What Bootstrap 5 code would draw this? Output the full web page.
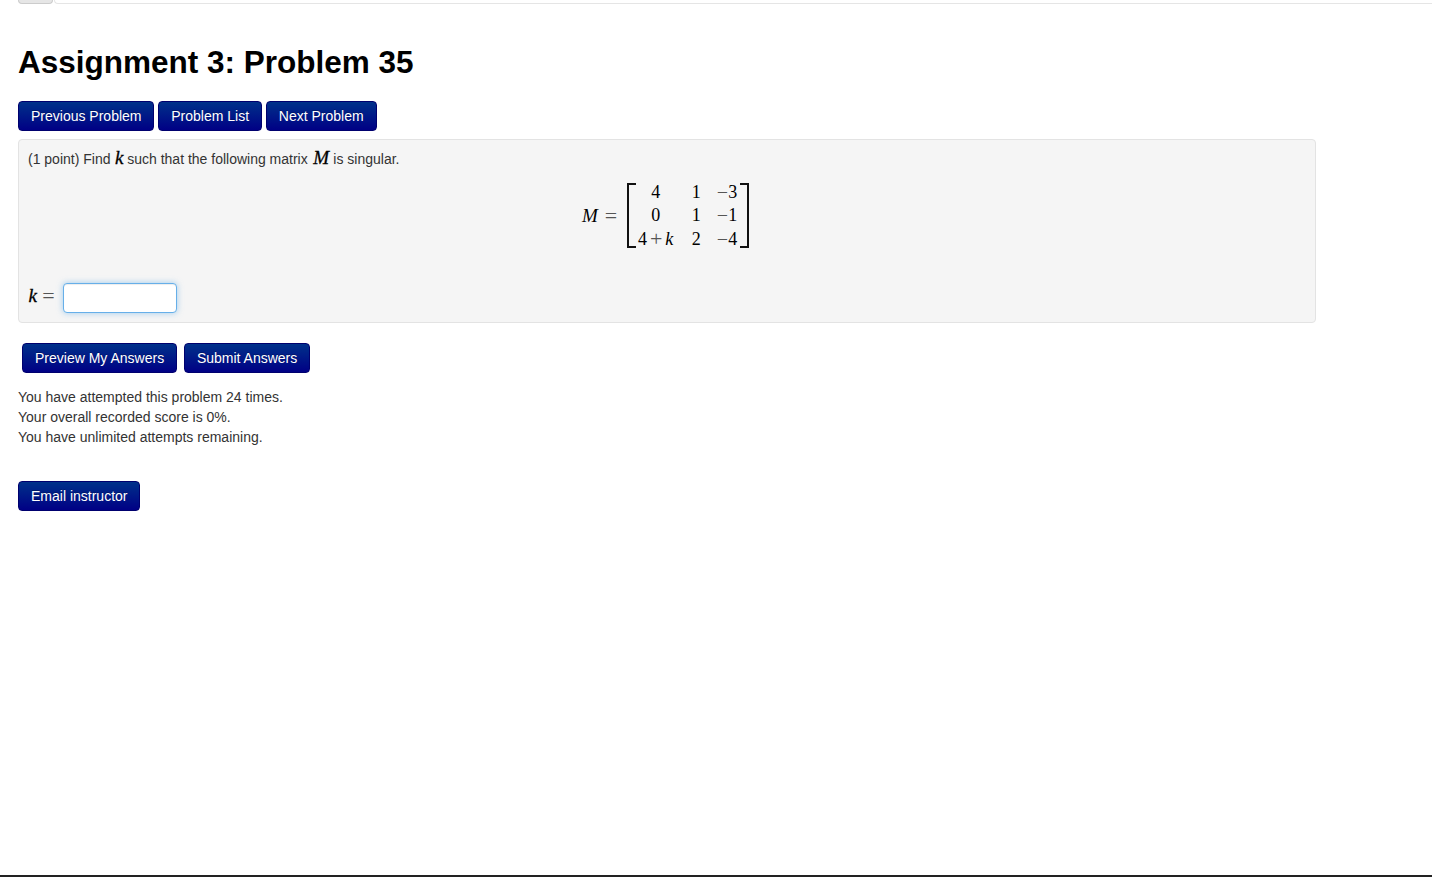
<!DOCTYPE html>
<html lang="en">
<head>
<meta charset="utf-8">
<title>Assignment 3: Problem 35</title>
<link href="https://cdn.jsdelivr.net/npm/bootstrap@5.3.0/dist/css/bootstrap.min.css" rel="stylesheet">
<style>
html,body{height:100%}
body{font-family:"Liberation Sans",Arial,sans-serif;font-size:14px;line-height:20px;color:#333;background:#fff}
.page-shell{height:877px;overflow:hidden;border-bottom:2px solid #222}
.top-strip{height:4px;padding-left:18px}
.top-tab{width:34.5px;height:4px;margin-right:1.5px;background:#e6e6e6;border:1px solid #ccc;border-top:0;border-radius:0 0 4px 4px}
.top-rule{height:4px;border-bottom:1px solid #e5e5e5;border-left:1px solid #e5e5e5;border-radius:0 0 0 4px}
.main-col{padding-left:18px;width:1316px}
.page-title{font-size:31.5px;line-height:40px;font-weight:700;color:#000;margin:38px 0 19px}
.wwbtn{font-family:"Liberation Sans",Arial,sans-serif;font-size:14px;line-height:20px;height:30px;padding:4px 11.75px 4px 12px;color:#fff;border:1px solid #00006e;border-radius:4px;background:linear-gradient(#00318a,#000085);text-shadow:0 -1px 0 rgba(0,0,0,.25);white-space:nowrap}
.wwbtn:hover{color:#fff}
.nav-row .wwbtn:last-child{padding-right:12.25px}
.problem-box{background:#f5f5f5;border:1px solid #e3e3e3;border-radius:4px;height:184px;margin-top:8px;padding:8px 9px 0}
.math{font-family:"Liberation Serif","DejaVu Serif",serif;color:#000}
.mvar{font-style:italic;font-size:19px;-webkit-text-stroke:.3px #000;margin-left:.5px}
.mvar-cap{margin:0 .5px 0 1.5px}
.display-math{font-size:18px;height:65px;margin-top:14px;padding-right:3px}
.mat-lhs{margin-right:10px}
.mat-lhs i{font-size:19px;margin-right:2.5px}
.mat-grid{display:grid;grid-template-columns:39px 42px 20px;grid-auto-rows:23.5px;width:122px;height:65px;border-left:2px solid #111;border-right:2px solid #111;position:relative;padding:0 10px 0 7px;align-items:center;align-content:center;text-align:center}
.mat-grid::before,.mat-grid::after{content:"";position:absolute;top:0;bottom:0;width:7px;border-top:2px solid #111;border-bottom:2px solid #111}
.mat-grid::before{left:0}
.mat-grid::after{right:0}
.mat-grid span{line-height:23px;white-space:nowrap}
.mat-grid .neg{justify-self:end}
.op{color:#555;font-size:22px;line-height:1;vertical-align:-1px}
.neg .op{font-size:20px}
.op-sp{margin:0 3px}
.answer-row{margin-top:35px}
.answer-label{font-size:17px;width:35px;white-space:nowrap;padding-bottom:4px}
.answer-label .op{margin-left:1px}
.ans-input{width:114px;height:30px;border:1px solid #66afe9;border-radius:4px;background:#fff;box-shadow:inset 0 1px 1px rgba(0,0,0,.075),0 0 6px rgba(102,175,233,.6);outline:0;padding:4px 6px}
.submit-row{margin:20px 0 14px 4px;gap:7px}
.nav-row{gap:4px}
.score-info{margin:0 0 34px}
</style>
</head>
<body>
<div class="page-shell">
  <div class="top-strip d-flex">
    <div class="top-tab flex-shrink-0"></div>
    <div class="top-rule flex-grow-1"></div>
  </div>
  <div class="main-col">
    <h1 class="page-title">Assignment 3: Problem 35</h1>
    <div class="d-flex nav-row">
      <a class="btn wwbtn" href="#">Previous Problem</a>
      <a class="btn wwbtn" href="#">Problem List</a>
      <a class="btn wwbtn" href="#">Next Problem</a>
    </div>
    <div class="problem-box">
      <div>(1 point) Find <span class="math mvar">k</span> such that the following matrix <span class="math mvar mvar-cap">M</span> is singular.</div>
      <div class="display-math math d-flex justify-content-center align-items-center">
        <span class="mat-lhs"><i>M</i> <span class="op">=</span></span>
        <div class="mat-grid">
          <span>4</span><span>1</span><span class="neg"><span class="op">−</span>3</span>
          <span>0</span><span>1</span><span class="neg"><span class="op">−</span>1</span>
          <span>4<span class="op op-sp">+</span><i>k</i></span><span>2</span><span class="neg"><span class="op">−</span>4</span>
        </div>
      </div>
      <div class="answer-row d-flex align-items-center">
        <span class="answer-label math"><span class="mvar">k</span> <span class="op">=</span></span>
        <input class="ans-input" type="text" aria-label="k">
      </div>
    </div>
    <div class="d-flex submit-row">
      <button class="btn wwbtn" type="button">Preview My Answers</button>
      <button class="btn wwbtn" type="button">Submit Answers</button>
    </div>
    <p class="score-info">You have attempted this problem 24 times.<br>Your overall recorded score is 0%.<br>You have unlimited attempts remaining.</p>
    <div class="d-flex"><a class="btn wwbtn" href="#">Email instructor</a></div>
  </div>
</div>
<script src="https://cdn.jsdelivr.net/npm/bootstrap@5.3.0/dist/js/bootstrap.bundle.min.js"></script>
</body>
</html>
